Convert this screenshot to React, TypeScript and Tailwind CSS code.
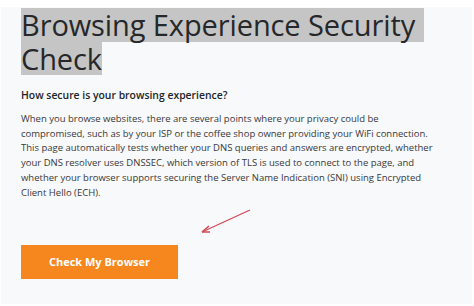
export default function App() {
  return (
    <div className="w-[474px] h-[306px] bg-white pt-[7px] pb-[2px] pl-px pr-[2px] overflow-hidden font-['Open_Sans',sans-serif]">
      <div className="relative h-full bg-[#f8f9fb] pl-[20px] pt-px">
        {/* title with grey selection-like highlight */}
        <h1 className="flex flex-col items-start text-[29px] leading-[33.5px] text-[#25272a] font-medium tracking-[-0.1px]">
          <span className="block h-[33.5px] bg-[#c5c5c5] pr-[9px]">Browsing Experience Security</span>
          <span className="block h-[33.5px] bg-[#c5c5c5]">Check</span>
        </h1>

        <h2 className="mt-[12px] text-[10.4px] leading-[16px] font-semibold text-[#212529]">
          How secure is your browsing experience?
        </h2>

        <p className="mt-[9px] text-[9.5px] leading-[14.7px] text-[#383838] whitespace-nowrap">
          When you browse websites, there are several points where your privacy could be
          <br />
          compromised, such as by your ISP or the coffee shop owner providing your WiFi connection.
          <br />
          This page automatically tests whether your DNS queries and answers are encrypted, whether
          <br />
          your DNS resolver uses DNSSEC, which version of TLS is used to connect to the page, and
          <br />
          whether your browser supports securing the Server Name Indication (SNI) using Encrypted
          <br />
          Client Hello (ECH).
        </p>

        <button className="mt-[45px] w-[157px] h-[34px] bg-[#f6871f] text-white text-[11px] font-bold">
          Check My Browser
        </button>

        {/* annotation arrow */}
        <svg className="absolute left-[179px] top-[200px]" width="80" height="30" viewBox="0 0 80 30">
          <line x1="70" y1="3" x2="22" y2="25" stroke="#d24a57" strokeWidth="1.3" />
          <path d="M22 25 L29 19 M22 25 L30 25" stroke="#d24a57" strokeWidth="1.6" fill="none" />
        </svg>
      </div>
    </div>
  );
}
